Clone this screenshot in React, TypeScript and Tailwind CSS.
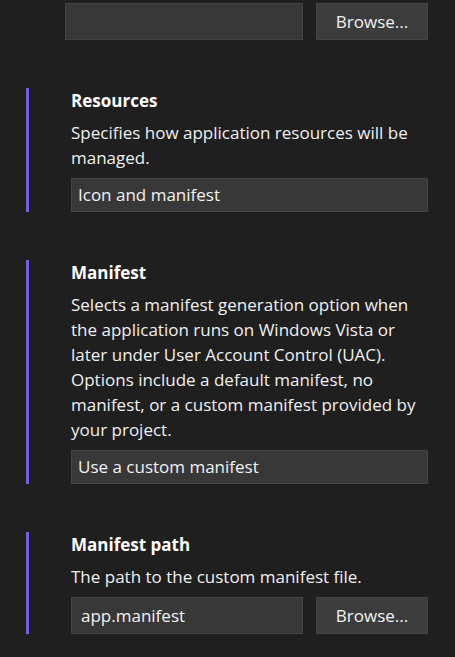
import React from "react";

const font = { fontFamily: '"Open Sans", "Noto Sans", sans-serif' };

function InputBox({ text, className }: { text?: string; className?: string }) {
  return (
    <div
      className={`h-[34px] bg-[#383838] border border-[#444444] flex items-center pl-[6px] text-[17px] text-[#f2f2f2] ${className ?? ""}`}
    >
      {text}
    </div>
  );
}

function BrowseButton() {
  return (
    <div className="w-[112px] shrink-0 h-[37px] bg-[#3c3c3c] border border-[#464646] flex items-center justify-center text-[17px] text-[#f2f2f2]">
      Browse...
    </div>
  );
}

function Section({
  title,
  desc,
  children,
}: {
  title: string;
  desc: string;
  children: React.ReactNode;
}) {
  return (
    <div className="ml-[26px] mr-[27px] border-l-[3px] border-[#7160e8] pl-[42px] flex flex-col">
      <div className="text-[17px] leading-[25px] font-bold text-white">{title}</div>
      <div className="mt-[7px] text-[17px] leading-[25px] text-[#f0f0f0]">{desc}</div>
      <div className="mt-[8px]">{children}</div>
    </div>
  );
}

export default function App() {
  return (
    <div className="w-[455px] h-[657px] bg-[#1f1f1f] overflow-hidden" style={font}>
      <div className="pt-[3px] flex gap-[13px] pl-[65px] pr-[27px]">
        <div className="flex-1 h-[37px] bg-[#383838] border border-[#444444]" />
        <BrowseButton />
      </div>
      <div className="mt-[48px] flex flex-col gap-[48px]">
        <Section
          title="Resources"
          desc="Specifies how application resources will be managed."
        >
          <InputBox text="Icon and manifest" />
        </Section>
        <Section
          title="Manifest"
          desc="Selects a manifest generation option when the application runs on Windows Vista or later under User Account Control (UAC). Options include a default manifest, no manifest, or a custom manifest provided by your project."
        >
          <InputBox text="Use a custom manifest" />
        </Section>
        <Section title="Manifest path" desc="The path to the custom manifest file.">
          <div className="flex gap-[13px]">
            <div className="flex-1 h-[37px] bg-[#383838] border border-[#444444] flex items-center pl-[9px] text-[17px] text-[#f2f2f2]">
              app.manifest
            </div>
            <BrowseButton />
          </div>
        </Section>
      </div>
    </div>
  );
}
